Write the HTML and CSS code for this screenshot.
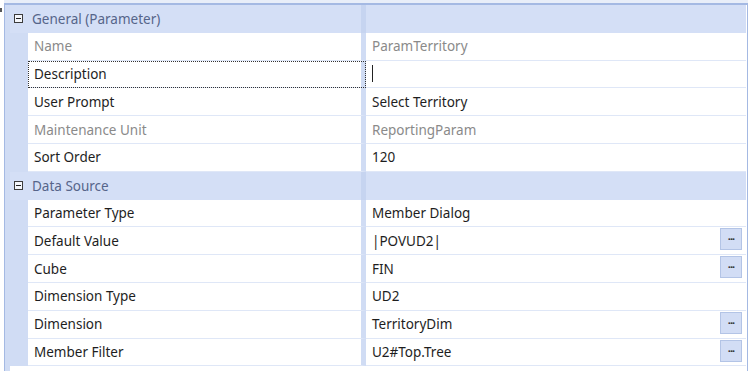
FILE: index.html
```html
<!DOCTYPE html>
<html lang="en">
<head>
  <meta charset="UTF-8" />
  <title>Parameter Properties</title>
  <link rel="stylesheet" href="styles.css">
</head>
<body>
  <div class="frame">
    <span class="corner"></span>
    <div class="sheet">

      <div class="cat">
        <div class="cat-label"><span class="toggle"></span>General (Parameter)</div>
        <div class="cat-value"></div>
      </div>
      <div class="row">
        <div class="name dim">Name</div>
        <div class="value dim">ParamTerritory</div>
      </div>
      <div class="row">
        <div class="name focus">Description</div>
        <div class="value"><span class="caret"></span></div>
      </div>
      <div class="row">
        <div class="name">User Prompt</div>
        <div class="value">Select Territory</div>
      </div>
      <div class="row">
        <div class="name dim">Maintenance Unit</div>
        <div class="value dim">ReportingParam</div>
      </div>
      <div class="row">
        <div class="name">Sort Order</div>
        <div class="value">120</div>
      </div>

      <div class="cat">
        <div class="cat-label"><span class="toggle"></span>Data Source</div>
        <div class="cat-value"></div>
      </div>
      <div class="row">
        <div class="name">Parameter Type</div>
        <div class="value">Member Dialog</div>
      </div>
      <div class="row">
        <div class="name">Default Value</div>
        <div class="value">|POVUD2|<button class="dots">&middot;&middot;&middot;</button></div>
      </div>
      <div class="row">
        <div class="name">Cube</div>
        <div class="value">FIN<button class="dots">&middot;&middot;&middot;</button></div>
      </div>
      <div class="row">
        <div class="name">Dimension Type</div>
        <div class="value">UD2</div>
      </div>
      <div class="row">
        <div class="name">Dimension</div>
        <div class="value">TerritoryDim<button class="dots">&middot;&middot;&middot;</button></div>
      </div>
      <div class="row">
        <div class="name">Member Filter</div>
        <div class="value">U2#Top.Tree<button class="dots">&middot;&middot;&middot;</button></div>
      </div>

    </div>
  </div>
</body>
</html>
```

FILE: styles.css
```css
:root {
  --gutter: #d0dcf4;
  --cat-bg: #d4dff6;
  --cat-split: #c6d4f0;
  --line: #dfe7f7;
  --frame: #a4b9e3;
  --text: #1e1e1e;
  --dim: #8a8a8a;
}

html, body {
  margin: 0;
  padding: 0;
  background: #fff;
}

body {
  font-family: "Noto Sans", "Open Sans", sans-serif;
  font-size: 13.5px;
  color: var(--text);
  width: 750px;
  height: 371px;
  overflow: hidden;
}

.frame {
  position: relative;
  margin: 0 2px 0 4px;
  padding-top: 3px;
  background: linear-gradient(#e8eef9, #e8eef9) top / 100% 3px no-repeat;
}

.corner {
  position: absolute;
  left: -4px;
  top: 8px;
  width: 2px;
  height: 4px;
  background: #555;
}

.sheet {
  border-top: 2px solid var(--frame);
  border-left: 1px solid var(--frame);
  border-right: 1px solid var(--frame);
  box-shadow: inset 5px 0 0 var(--gutter);
  padding: 0 1px 8px 5px;
  background: #fff;
}

.cat, .row {
  display: flex;
  height: 27.8px;
  box-sizing: border-box;
  background: var(--gutter);
}

.cat {
  background: var(--cat-bg);
  color: #56658a;
}

.cat-label {
  display: flex;
  align-items: center;
  width: 361px;
  border-right: 5px solid var(--cat-split);
  box-sizing: border-box;
  margin-left: -5px;
  padding-left: 9px;
}

.cat-value {
  flex: 1;
}

.toggle {
  position: relative;
  width: 7px;
  height: 7px;
  border: 1px solid #3c3c3c;
  background: #f4f6fb;
  margin-right: 9px;
}

.toggle::after {
  content: "";
  position: absolute;
  left: 1px;
  top: 3px;
  width: 5px;
  height: 1px;
  background: #222;
}

.row {
  padding-left: 18px;
}

.name, .value {
  display: flex;
  align-items: center;
  background: #fff;
  border-bottom: 1px solid var(--line);
  padding-left: 6px;
  box-sizing: border-box;
  white-space: nowrap;
}

.name {
  width: 338px;
  border-right: 5px solid var(--gutter);
}

.value {
  flex: 1;
  position: relative;
}

.dim {
  color: var(--dim);
}

.focus {
  outline: 1px dotted #333;
  outline-offset: -1px;
}

.caret {
  width: 1px;
  height: 17px;
  background: #222;
}

.dots {
  position: absolute;
  right: 4px;
  top: 1px;
  width: 22px;
  height: 22px;
  padding: 0;
  border: 1px solid #b3c4e6;
  background: #d2ddf5;
  color: #333;
  font: bold 11px "Noto Sans", sans-serif;
  line-height: 18px;
  letter-spacing: -1px;
}
```
